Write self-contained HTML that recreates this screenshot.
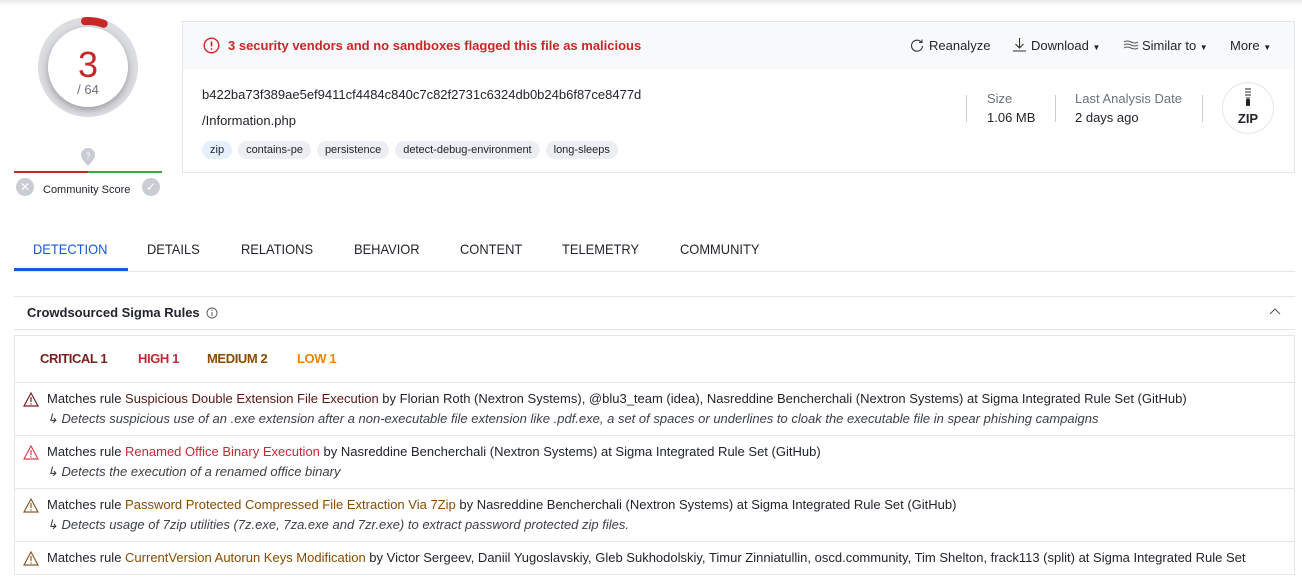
<!DOCTYPE html>
<html><head><meta charset="utf-8"><style>
*{box-sizing:border-box;margin:0;padding:0}
body{width:1302px;height:570px;overflow:hidden;background:#fff;font-family:"Liberation Sans",Arial,sans-serif;color:#21252b;font-size:13px;position:relative}
.a{position:absolute;white-space:nowrap}
.tag{display:inline-block;background:#eceef2;border-radius:10px;padding:3px 8px;font-size:11px;color:#21252b;margin-right:6px}
.tab{position:absolute;top:241px;font-size:14px;color:#21252b;transform:scaleX(.92);transform-origin:left}
.row{position:absolute;left:14px;width:1281px;border-top:1px solid #e3e6ea}
.row .l1{position:absolute;left:33px;top:8px;font-size:13px;white-space:nowrap}
.row .l2{position:absolute;left:33px;top:28px;font-size:13px;font-style:italic;color:#3c4047;white-space:nowrap}
.row svg{position:absolute;left:9px;top:9px}
</style></head><body>
<div class="a" style="left:0;top:0;width:1302px;height:6px;background:linear-gradient(#e6e8eb,#fff)"></div>

<!-- gauge -->
<div class="a" style="left:38px;top:17px;width:100px;height:100px;border-radius:50%;background:#dcdde1"></div>
<svg class="a" style="left:38px;top:17px" width="100" height="100"><path d="M47 4.1 A46 46 0 0 1 65.7 6.8" stroke="#c62828" stroke-width="8" fill="none" stroke-linecap="round"/></svg>
<div class="a" style="left:48px;top:27px;width:80px;height:80px;border-radius:50%;background:#fff;box-shadow:0 3px 8px rgba(0,0,0,.3)"></div>
<div class="a" style="left:48px;top:44px;width:80px;text-align:center;font-size:36px;color:#c62828">3</div>
<div class="a" style="left:48px;top:82px;width:80px;text-align:center;font-size:13px;color:#6b7280">/ 64</div>
<svg class="a" style="left:80px;top:147px" width="16" height="20"><path d="M8 1a7 7 0 0 1 7 7c0 4-7 11-7 11S1 12 1 8a7 7 0 0 1 7-7z" fill="#c9ccd3"/><text x="8" y="12" font-size="9" fill="#fff" text-anchor="middle" font-family="Liberation Sans">?</text></svg>
<div class="a" style="left:14px;top:171px;width:74px;height:2px;background:#c62828"></div>
<div class="a" style="left:88px;top:171px;width:74px;height:2px;background:#3aa845"></div>
<div class="a" style="left:16px;top:178px;width:18px;height:18px;border-radius:50%;background:#c9ccd3;color:#fff;text-align:center;line-height:18px;font-size:12px">✕</div>
<div class="a" style="left:142px;top:178px;width:18px;height:18px;border-radius:50%;background:#c9ccd3;color:#fff;text-align:center;line-height:18px;font-size:12px">✓</div>
<div class="a" style="left:43px;top:184px;font-size:11px">Community Score</div>

<!-- card -->
<div class="a" style="left:182px;top:21px;width:1113px;height:152px;border:1px solid #e3e6ea"></div>
<div class="a" style="left:183px;top:22px;width:1111px;height:47px;background:#f8f9fb"></div>
<svg class="a" style="left:203px;top:37px" width="17" height="17"><circle cx="8.5" cy="8.5" r="7.3" fill="none" stroke="#c62828" stroke-width="1.4"/><path d="M8.5 4.5v5" stroke="#c62828" stroke-width="1.6"/><circle cx="8.5" cy="12" r=".9" fill="#c62828"/></svg>
<div class="a" style="left:228px;top:38px;font-size:13px;font-weight:bold;color:#c62828">3 security vendors and no sandboxes flagged this file as malicious</div>
<svg class="a" style="left:910px;top:38px" width="14" height="14"><path d="M11.5 4.5A5.5 5.5 0 1 0 12.5 8" fill="none" stroke="#333" stroke-width="1.1"/><path d="M9 4.5h3V1.5" fill="none" stroke="#333" stroke-width="1.1"/></svg>
<div class="a" style="left:929px;top:38px">Reanalyze</div>
<svg class="a" style="left:1012px;top:37px" width="15" height="15"><path d="M7.5 1v10M3.5 7l4 4 4-4M1 14h13" fill="none" stroke="#333" stroke-width="1.1"/></svg>
<div class="a" style="left:1031px;top:38px">Download <span style="font-size:8px">▼</span></div>
<svg class="a" style="left:1123px;top:39px" width="16" height="12"><path d="M1 3q3-2 7 0t7 0M1 6q3-2 7 0t7 0M1 9q3-2 7 0t7 0" fill="none" stroke="#555" stroke-width="1"/></svg>
<div class="a" style="left:1142px;top:38px">Similar to <span style="font-size:8px">▼</span></div>
<div class="a" style="left:1230px;top:38px">More <span style="font-size:8px">▼</span></div>

<div class="a" style="left:202px;top:87px;font-size:13px">b422ba73f389ae5ef9411cf4484c840c7c82f2731c6324db0b24b6f87ce8477d</div>
<div class="a" style="left:202px;top:113px;font-size:13px">/Information.php</div>
<div class="a" style="left:202px;top:141px"><span class="tag" style="background:#e4f1fd">zip</span><span class="tag">contains-pe</span><span class="tag">persistence</span><span class="tag">detect-debug-environment</span><span class="tag">long-sleeps</span></div>

<div class="a" style="left:966px;top:95px;width:1px;height:27px;background:#ccc"></div>
<div class="a" style="left:987px;top:91px;color:#6b7280">Size</div>
<div class="a" style="left:987px;top:110px">1.06 MB</div>
<div class="a" style="left:1055px;top:95px;width:1px;height:27px;background:#ccc"></div>
<div class="a" style="left:1075px;top:91px;color:#6b7280">Last Analysis Date</div>
<div class="a" style="left:1075px;top:110px">2 days ago</div>
<div class="a" style="left:1202px;top:95px;width:1px;height:27px;background:#ccc"></div>
<div class="a" style="left:1222px;top:82px;width:52px;height:52px;border-radius:50%;border:1px solid #e3e6ea"></div>
<svg class="a" style="left:1243px;top:88px" width="10" height="20"><path d="M2 1h6M2 4h6M2 7h6M3 10h4" stroke="#222" stroke-width="1"/><rect x="3" y="11" width="4" height="7" rx="1" fill="#222"/></svg>
<div class="a" style="left:1222px;top:111px;width:52px;text-align:center;font-size:13px;font-weight:bold">ZIP</div>

<!-- tabs -->
<div class="tab" style="left:33px;color:#1a56db">DETECTION</div>
<div class="tab" style="left:147px">DETAILS</div>
<div class="tab" style="left:241px">RELATIONS</div>
<div class="tab" style="left:354px">BEHAVIOR</div>
<div class="tab" style="left:460px">CONTENT</div>
<div class="tab" style="left:562px">TELEMETRY</div>
<div class="tab" style="left:680px">COMMUNITY</div>
<div class="a" style="left:14px;top:271px;width:1281px;height:1px;background:#e3e6ea"></div>
<div class="a" style="left:14px;top:268px;width:114px;height:3px;background:#1a56db"></div>

<!-- sigma -->
<div class="a" style="left:14px;top:296px;width:1281px;height:1px;background:#e3e6ea"></div>
<div class="a" style="left:27px;top:305px;font-size:13px;font-weight:bold">Crowdsourced Sigma Rules</div>
<svg class="a" style="left:206px;top:307px" width="12" height="12"><circle cx="6" cy="6" r="5" fill="none" stroke="#555" stroke-width=".9"/><path d="M6 5v4" stroke="#555"/><circle cx="6" cy="3.3" r=".7" fill="#555"/></svg>
<svg class="a" style="left:1269px;top:308px" width="12" height="8"><path d="M1 6l5-5 5 5" fill="none" stroke="#555" stroke-width="1"/></svg>
<div class="a" style="left:14px;top:329px;width:1281px;height:1px;background:#e3e6ea"></div>
<div class="a" style="left:14px;top:335px;width:1281px;height:240px;border:1px solid #e3e6ea"></div>
<div class="a" style="left:40px;top:351px;font-size:13px;color:#7a1f1f;font-weight:bold;letter-spacing:-.4px">CRITICAL 1</div>
<div class="a" style="left:138px;top:351px;font-size:13px;color:#c62838;font-weight:bold;letter-spacing:-.4px">HIGH 1</div>
<div class="a" style="left:207px;top:351px;font-size:13px;color:#8a4b00;font-weight:bold;letter-spacing:-.4px">MEDIUM 2</div>
<div class="a" style="left:297px;top:351px;font-size:13px;color:#f08300;font-weight:bold;letter-spacing:-.4px">LOW 1</div>

<div class="row" style="top:382px;height:53px">
<svg width="16" height="15"><path d="M8 1L15 14H1z" fill="none" stroke="#7a1f1f" stroke-width="1.2"/><path d="M8 5v5" stroke="#7a1f1f" stroke-width="1.2"/><circle cx="8" cy="12" r=".7" fill="#7a1f1f"/></svg>
<div class="l1">Matches rule <span style="color:#5b1616">Suspicious Double Extension File Execution</span> by Florian Roth (Nextron Systems), @blu3_team (idea), Nasreddine Bencherchali (Nextron Systems) at Sigma Integrated Rule Set (GitHub)</div>
<div class="l2">↳ Detects suspicious use of an .exe extension after a non-executable file extension like .pdf.exe, a set of spaces or underlines to cloak the executable file in spear phishing campaigns</div>
</div>
<div class="row" style="top:435px;height:53px">
<svg width="16" height="15"><path d="M8 1L15 14H1z" fill="none" stroke="#d9434f" stroke-width="1.2"/><path d="M8 5v5" stroke="#d9434f" stroke-width="1.2"/><circle cx="8" cy="12" r=".7" fill="#d9434f"/></svg>
<div class="l1">Matches rule <span style="color:#c62838">Renamed Office Binary Execution</span> by Nasreddine Bencherchali (Nextron Systems) at Sigma Integrated Rule Set (GitHub)</div>
<div class="l2">↳ Detects the execution of a renamed office binary</div>
</div>
<div class="row" style="top:488px;height:53px">
<svg width="16" height="15"><path d="M8 1L15 14H1z" fill="none" stroke="#8a5a2b" stroke-width="1.2"/><path d="M8 5v5" stroke="#8a5a2b" stroke-width="1.2"/><circle cx="8" cy="12" r=".7" fill="#8a5a2b"/></svg>
<div class="l1">Matches rule <span style="color:#8a4b00">Password Protected Compressed File Extraction Via 7Zip</span> by Nasreddine Bencherchali (Nextron Systems) at Sigma Integrated Rule Set (GitHub)</div>
<div class="l2">↳ Detects usage of 7zip utilities (7z.exe, 7za.exe and 7zr.exe) to extract password protected zip files.</div>
</div>
<div class="row" style="top:541px;height:40px">
<svg width="16" height="15"><path d="M8 1L15 14H1z" fill="none" stroke="#8a5a2b" stroke-width="1.2"/><path d="M8 5v5" stroke="#8a5a2b" stroke-width="1.2"/><circle cx="8" cy="12" r=".7" fill="#8a5a2b"/></svg>
<div class="l1">Matches rule <span style="color:#8a4b00">CurrentVersion Autorun Keys Modification</span> by Victor Sergeev, Daniil Yugoslavskiy, Gleb Sukhodolskiy, Timur Zinniatullin, oscd.community, Tim Shelton, frack113 (split) at Sigma Integrated Rule Set</div>
</div>
</body></html>
